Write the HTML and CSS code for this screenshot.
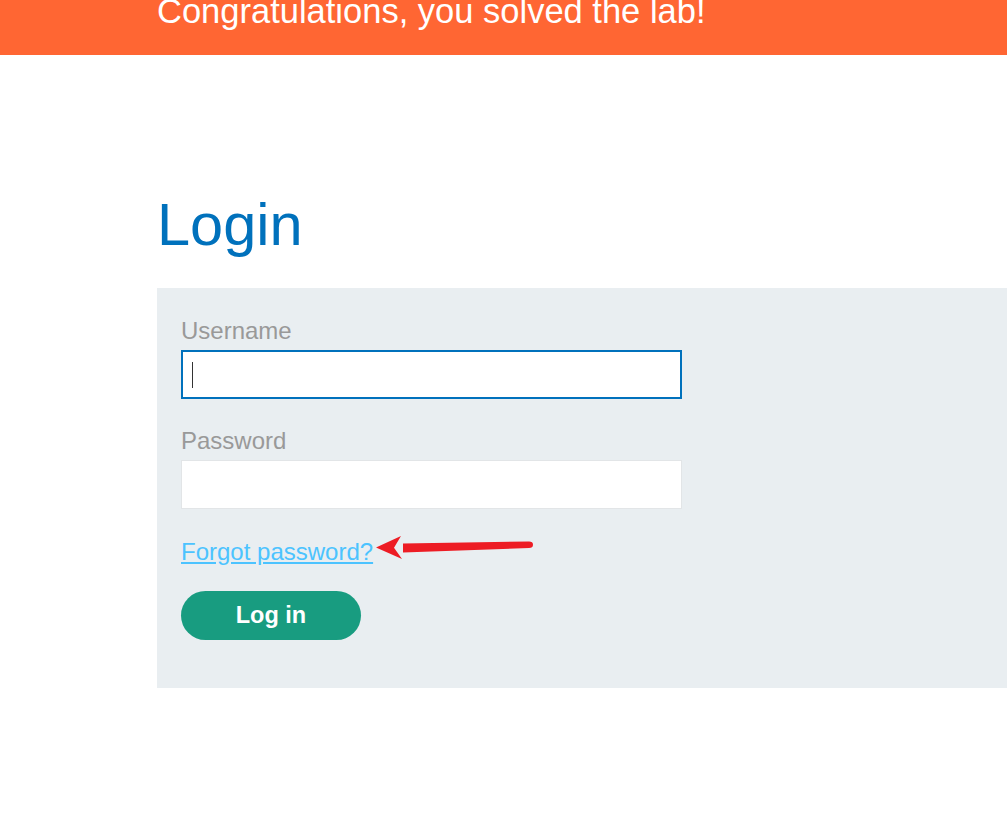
FILE: index.html
```html
<!DOCTYPE html>
<html>
<head>
<meta charset="utf-8">
<title>Login</title>
<link rel="stylesheet" href="styles.css">
</head>
<body>
<div class="banner">
	<h4 class="banner-text">Congratulations, you solved the lab!</h4>
</div>
<section class="page">
	<h1 class="title">Login</h1>
	<form class="login-form">
		<label class="field-label" for="username">Username</label>
		<div class="input-wrap">
			<input class="field-input is-focused" id="username" type="text" name="username">
			<span class="caret"></span>
		</div>
		<label class="field-label" for="password">Password</label>
		<div class="input-wrap">
			<input class="field-input" id="password" type="password" name="password">
		</div>
		<div class="forgot-row">
			<a class="forgot-link" href="#">Forgot password?</a>
			<svg class="arrow" width="170" height="30" viewBox="0 0 170 30">
				<path d="M28 8.5 L154 6.5 Q158 6.5 158 9.75 Q158 13 154 13 L28 17.5 Z" fill="#ed1c24"/>
				<path d="M1 12.5 L26 1 L19 12.8 L27 24 Z" fill="#ed1c24"/>
			</svg>
		</div>
		<button class="login-btn" type="button">Log in</button>
	</form>
</section>
</body>
</html>
```

FILE: styles.css
```css
body{margin:0; background-color:#fff; font-family:"Liberation Sans", Arial, sans-serif; color:#333;}

.banner{height:55px; background-color:#ff6633; padding-left:157px; overflow:hidden;}
.banner-text{margin:0; font-size:34.5px; font-weight:normal; line-height:22px; color:#fff;}

.page{padding-left:157px;}
.title{margin:135px 0 29px; font-size:59.5px; font-weight:normal; line-height:69px; color:#0071bc;}

.login-form{display:flex; flex-direction:column; align-items:flex-start; background-color:#e9eef1; padding:29px 24px 48px; height:323px;}
.field-label{font-size:24px; line-height:28px; color:#999;}
.input-wrap{position:relative; margin:5px 0 28px;}
.field-input{display:block; box-sizing:border-box; width:501px; height:49px; margin:0; border:1px solid #e2e5e7; background-color:#fff; outline:none; font-size:20px;}
.field-input.is-focused{border:2px solid #0071bc;}
.caret{position:absolute; left:11px; top:12px; width:1px; height:26px; background-color:#333;}

.forgot-row{position:relative; margin:1px 0 25px;}
.forgot-link{font-size:24px; line-height:28px; color:#4cc3ff; text-decoration:underline;}
.arrow{position:absolute; left:194px; top:-3px;}

.login-btn{width:180px; height:49px; border:0; border-radius:25px; background-color:#189c80; color:#fff; font-family:"Liberation Sans", Arial, sans-serif; font-size:23.5px; font-weight:bold; padding:0;}
```
